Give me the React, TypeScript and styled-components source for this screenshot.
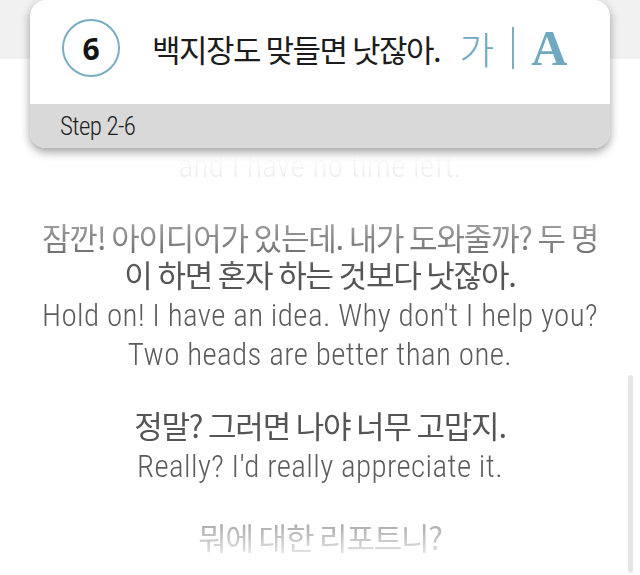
import React from "react";
import styled, { createGlobalStyle } from "styled-components";

const GlobalStyle = createGlobalStyle`
  html, body { margin: 0; padding: 0; background: #ffffff; }
  body { font-family: "Noto Sans CJK KR", "Noto Sans", sans-serif; }
  * { box-sizing: border-box; }
`;

const Page = styled.div`
  position: relative;
  width: 640px;
  height: 575px;
  overflow: hidden;
  background: #ffffff;
  display: flex;
  flex-direction: column;
`;

const TopBand = styled.div`
  flex: 0 0 59px;
  background: #f1f1f1;
`;

const Scroller = styled.div`
  flex: 1 1 auto;
  padding-top: 88px;
  display: flex;
  flex-direction: column;
  align-items: center;
  -webkit-mask-image: linear-gradient(
    to bottom,
    rgba(0, 0, 0, 0) 96px,
    rgba(0, 0, 0, 0.12) 118px,
    #000 212px,
    #000 420px,
    rgba(0, 0, 0, 0.1) 500px
  );
  mask-image: linear-gradient(
    to bottom,
    rgba(0, 0, 0, 0) 96px,
    rgba(0, 0, 0, 0.12) 118px,
    #000 212px,
    #000 420px,
    rgba(0, 0, 0, 0.1) 500px
  );
`;

const Block = styled.div`
  display: flex;
  flex-direction: column;
  align-items: center;
  margin-bottom: 32px;
`;

const Korean = styled.div`
  font-family: "Noto Sans CJK KR", "Noto Sans", sans-serif;
  font-weight: 400;
  font-size: 31px;
  line-height: 37px;
  letter-spacing: -1.2px;
  color: #555555;
  white-space: nowrap;
`;

const English = styled.div<{ $first?: boolean }>`
  font-family: "Roboto Condensed", Roboto, sans-serif;
  font-stretch: condensed;
  font-weight: 300;
  font-size: 31px;
  line-height: 39px;
  letter-spacing: 0.4px;
  color: #5c5c5c;
  white-space: nowrap;
  margin-top: ${(p) => (p.$first ? "4px" : "0")};
`;

const Card = styled.div`
  position: absolute;
  top: 0;
  left: 30px;
  width: 580px;
  height: 148px;
  border-radius: 16px;
  background: #ffffff;
  box-shadow: 0 4px 10px rgba(0, 0, 0, 0.38);
  overflow: hidden;
  display: flex;
  flex-direction: column;
`;

const CardTop = styled.div`
  flex: 0 0 104px;
  display: flex;
  align-items: center;
  padding: 0 0 8px 32px;
`;

const NumberBadge = styled.div`
  width: 58px;
  height: 58px;
  border-radius: 50%;
  border: 2px solid #7aaec1;
  display: flex;
  align-items: center;
  justify-content: center;
  font-family: "Noto Sans", sans-serif;
  font-weight: 700;
  font-size: 30px;
  color: #141414;
  flex: 0 0 auto;
`;

const Title = styled.div`
  margin-left: 32px;
  font-family: "Noto Sans CJK KR", sans-serif;
  font-weight: 400;
  font-size: 31px;
  letter-spacing: -1.5px;
  color: #1c1c1c;
  white-space: nowrap;
`;

const FontKorean = styled.span`
  margin-left: 19px;
  font-family: "Noto Sans CJK KR", sans-serif;
  font-weight: 300;
  font-size: 38px;
  color: #6fa8bf;
  line-height: 1;
`;

const Divider = styled.span`
  display: inline-block;
  width: 2px;
  height: 42px;
  margin: 0 17px 0 18px;
  background: #7aaec1;
`;

const FontLatin = styled.span`
  font-family: "Liberation Serif", serif;
  font-weight: 700;
  font-size: 50px;
  color: #6fa8bf;
  line-height: 1;
`;

const CardFooter = styled.div`
  flex: 1 1 auto;
  background: #d9d9d9;
  display: flex;
  align-items: center;
  padding-left: 30px;
  font-family: "Roboto Condensed", Roboto, sans-serif;
  font-stretch: condensed;
  font-weight: 300;
  font-size: 25px;
  letter-spacing: -0.6px;
  color: #1e1e1e;
`;

const Scrollbar = styled.div`
  position: absolute;
  right: 7px;
  top: 375px;
  width: 5px;
  height: 198px;
  border-radius: 3px;
  background: #e6e6e6;
`;

export default function App() {
  return (
    <>
      <GlobalStyle />
      <Page>
        <TopBand />
        <Scroller>
          <Block>
            <English>and I have no time left.</English>
          </Block>
          <Block>
            <Korean>잠깐! 아이디어가 있는데. 내가 도와줄까? 두 명</Korean>
            <Korean>이 하면 혼자 하는 것보다 낫잖아.</Korean>
            <English $first>Hold on! I have an idea. Why don't I help you?</English>
            <English>Two heads are better than one.</English>
          </Block>
          <Block>
            <Korean>정말? 그러면 나야 너무 고맙지.</Korean>
            <English $first>Really? I'd really appreciate it.</English>
          </Block>
          <Block>
            <Korean>뭐에 대한 리포트니?</Korean>
          </Block>
        </Scroller>
        <Card>
          <CardTop>
            <NumberBadge>6</NumberBadge>
            <Title>백지장도 맞들면 낫잖아.</Title>
            <FontKorean>가</FontKorean>
            <Divider />
            <FontLatin>A</FontLatin>
          </CardTop>
          <CardFooter>Step 2-6</CardFooter>
        </Card>
        <Scrollbar />
      </Page>
    </>
  );
}
